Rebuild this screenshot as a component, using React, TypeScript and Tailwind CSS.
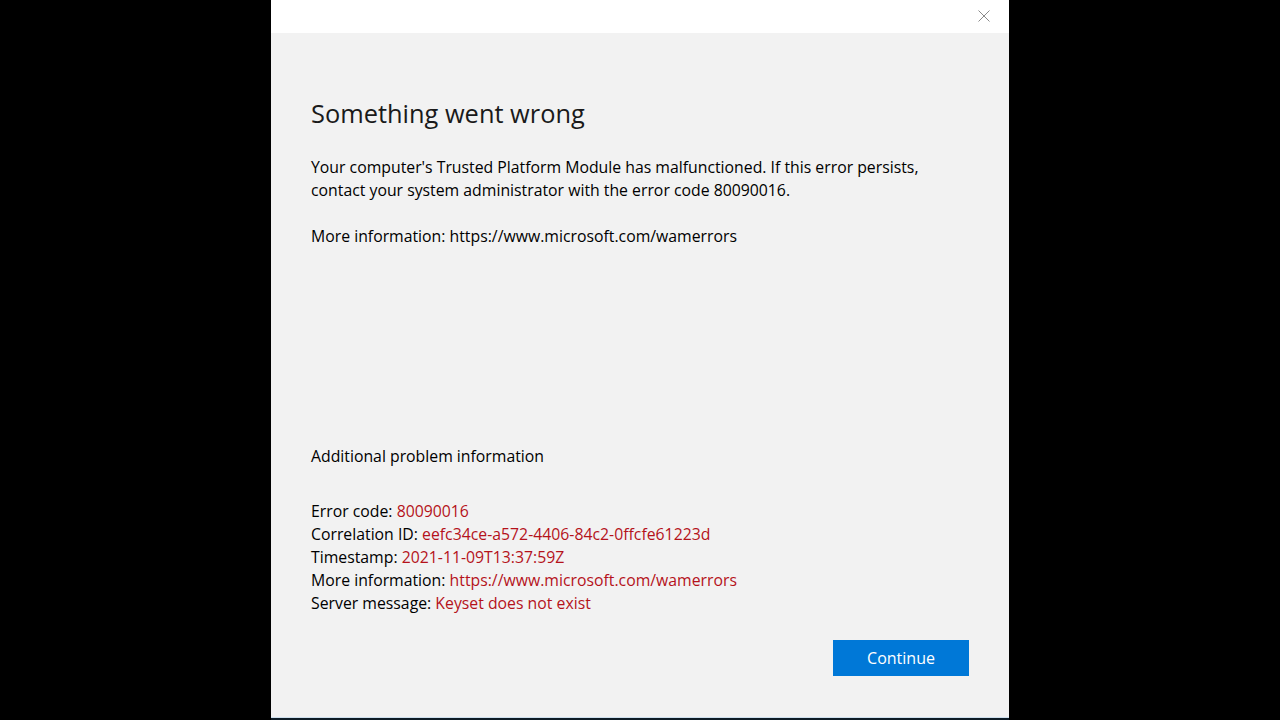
import React from "react";

export default function App() {
  const font = { fontFamily: '"Open Sans", "Noto Sans", sans-serif' };
  const rows: [string, string][] = [
    ["Error code: ", "80090016"],
    ["Correlation ID: ", "eefc34ce-a572-4406-84c2-0ffcfe61223d"],
    ["Timestamp: ", "2021-11-09T13:37:59Z"],
    ["More information: ", "https://www.microsoft.com/wamerrors"],
    ["Server message: ", "Keyset does not exist"],
  ];
  return (
    <div className="w-[1280px] h-[720px] bg-black flex flex-col items-center overflow-hidden" style={font}>
      <div className="w-[738px] h-[717px] flex flex-col bg-[#f2f2f2]">
        <div className="h-[33px] bg-white relative shrink-0">
          <svg className="absolute right-[19px] top-[10px]" width="12" height="12" viewBox="0 0 12 12">
            <path d="M0.5 0.5 L11.5 11.5 M11.5 0.5 L0.5 11.5" stroke="#8a8a8a" strokeWidth="1" fill="none" />
          </svg>
        </div>
        <div className="flex-1 flex flex-col pl-[40px] pr-[40px] pt-[63px] text-[#000000]">
          <div className="text-[25.4px] leading-[34px] text-[#1a1a1a]">Something went wrong</div>
          <div className="mt-[26px] text-[15.8px] leading-[23px] whitespace-nowrap">
            Your computer's Trusted Platform Module has malfunctioned. If this error persists,
            <br />
            contact your system administrator with the error code 80090016.
          </div>
          <div className="mt-[23px] text-[15.8px] leading-[23px]">
            More information: https://www.microsoft.com/wamerrors
          </div>
          <div className="mt-[197px] text-[15.8px] leading-[23px]">Additional problem information</div>
          <div className="mt-[32px] flex flex-col text-[15.8px] leading-[23px]">
            {rows.map(([k, v]) => (
              <div key={k}>
                {k}
                <span className="text-[#b5121b]">{v}</span>
              </div>
            ))}
          </div>
          <div className="mt-[25px] flex justify-end">
            <button className="w-[136px] h-[36px] bg-[#0078d7] text-white text-[16px]">Continue</button>
          </div>
        </div>
      </div>
      <div className="w-[738px] h-[3px] border-t border-[#cfe0ee] bg-[#0e1c26]" />
    </div>
  );
}
